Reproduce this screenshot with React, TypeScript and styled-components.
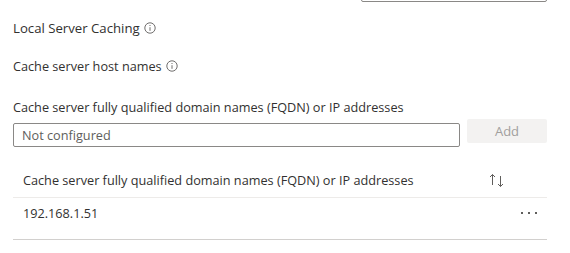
import React from "react";
import styled, { createGlobalStyle } from "styled-components";

const GlobalStyle = createGlobalStyle`
  html, body {
    margin: 0;
    padding: 0;
    background: #ffffff;
  }
  body {
    font-family: "Segoe UI", "Open Sans", "Noto Sans", sans-serif;
    font-size: 12.7px;
    color: #323130;
    overflow: hidden;
  }
`;

const Page = styled.div`
  display: flex;
  flex-direction: column;
  padding: 0 23px 0 13px;
  width: 570px;
  box-sizing: border-box;
`;

const DropdownStub = styled.div`
  align-self: flex-end;
  width: 186px;
  height: 24px;
  margin-top: -22px;
  box-sizing: border-box;
  border: 1px solid #8a8886;
  border-radius: 2px;
`;

const FieldTitle = styled.div<{ gap: number; size?: number }>`
  display: flex;
  align-items: center;
  gap: 4px;
  margin-top: ${(p) => p.gap}px;
  line-height: 20px;
  font-size: ${(p) => p.size ?? 12.7}px;
`;

const InputRow = styled.div`
  display: flex;
  align-items: flex-start;
  gap: 7px;
  margin-top: 2px;
`;

const TextInput = styled.input`
  flex: 1;
  height: 24px;
  margin: 4px 0 0;
  padding: 0 8px;
  box-sizing: border-box;
  border: 1px solid #8a8886;
  border-radius: 2px;
  font: inherit;
  color: #323130;
  &::placeholder {
    color: #605e5c;
  }
`;

const AddButton = styled.button`
  width: 80px;
  height: 24px;
  border: none;
  border-radius: 2px;
  background: #f3f2f1;
  color: #a19f9d;
  font: inherit;
  font-size: 13px;
  padding: 0;
`;

const Table = styled.div`
  display: flex;
  flex-direction: column;
  margin-top: 16px;
`;

const Row = styled.div<{ header?: boolean }>`
  display: flex;
  align-items: ${(p) => (p.header ? "center" : "flex-start")};
  padding: ${(p) => (p.header ? "7px 10px" : "5px 10px 16px")};
  line-height: 20px;
  border-bottom: 1px solid ${(p) => (p.header ? "#edebe9" : "#d2d0ce")};
`;

const Cell = styled.div`
  flex: 1;
`;

const SortButton = styled.span`
  display: flex;
  margin-right: 32px;
  color: #605e5c;
`;

const More = styled.span`
  display: flex;
  gap: 5px;
  align-items: center;
  height: 20px;
  span {
    width: 2px;
    height: 2px;
    background: #605e5c;
  }
`;

const InfoIcon = () => (
  <svg width="12" height="12" viewBox="0 0 12 12" fill="none">
    <circle cx="6" cy="6" r="5.2" stroke="#605e5c" strokeWidth="0.9" />
    <line x1="6" y1="5.2" x2="6" y2="8.8" stroke="#605e5c" strokeWidth="0.9" />
    <circle cx="6" cy="3.5" r="0.6" fill="#605e5c" />
  </svg>
);

const SortIcon = () => (
  <svg width="16" height="16" viewBox="0 0 16 16" fill="none" stroke="#605e5c" strokeWidth="1">
    <path d="M3.5 13V2.5M1 5L3.5 2.5L6 5" />
    <path d="M11.5 4V14.5M9 12L11.5 14.5L14 12" />
  </svg>
);

const App = () => {
  return (
    <>
      <GlobalStyle />
      <Page>
        <DropdownStub />
        <FieldTitle gap={16} size={13.2}>
          Local Server Caching <InfoIcon />
        </FieldTitle>
        <FieldTitle gap={18}>
          Cache server host names <InfoIcon />
        </FieldTitle>
        <FieldTitle gap={21}>
          Cache server fully qualified domain names (FQDN) or IP addresses
        </FieldTitle>
        <InputRow>
          <TextInput placeholder="Not configured" />
          <AddButton disabled>Add</AddButton>
        </InputRow>
        <Table>
          <Row header>
            <Cell>Cache server fully qualified domain names (FQDN) or IP addresses</Cell>
            <SortButton>
              <SortIcon />
            </SortButton>
          </Row>
          <Row>
            <Cell>192.168.1.51</Cell>
            <More>
              <span />
              <span />
              <span />
            </More>
          </Row>
        </Table>
      </Page>
    </>
  );
};

export default App;
